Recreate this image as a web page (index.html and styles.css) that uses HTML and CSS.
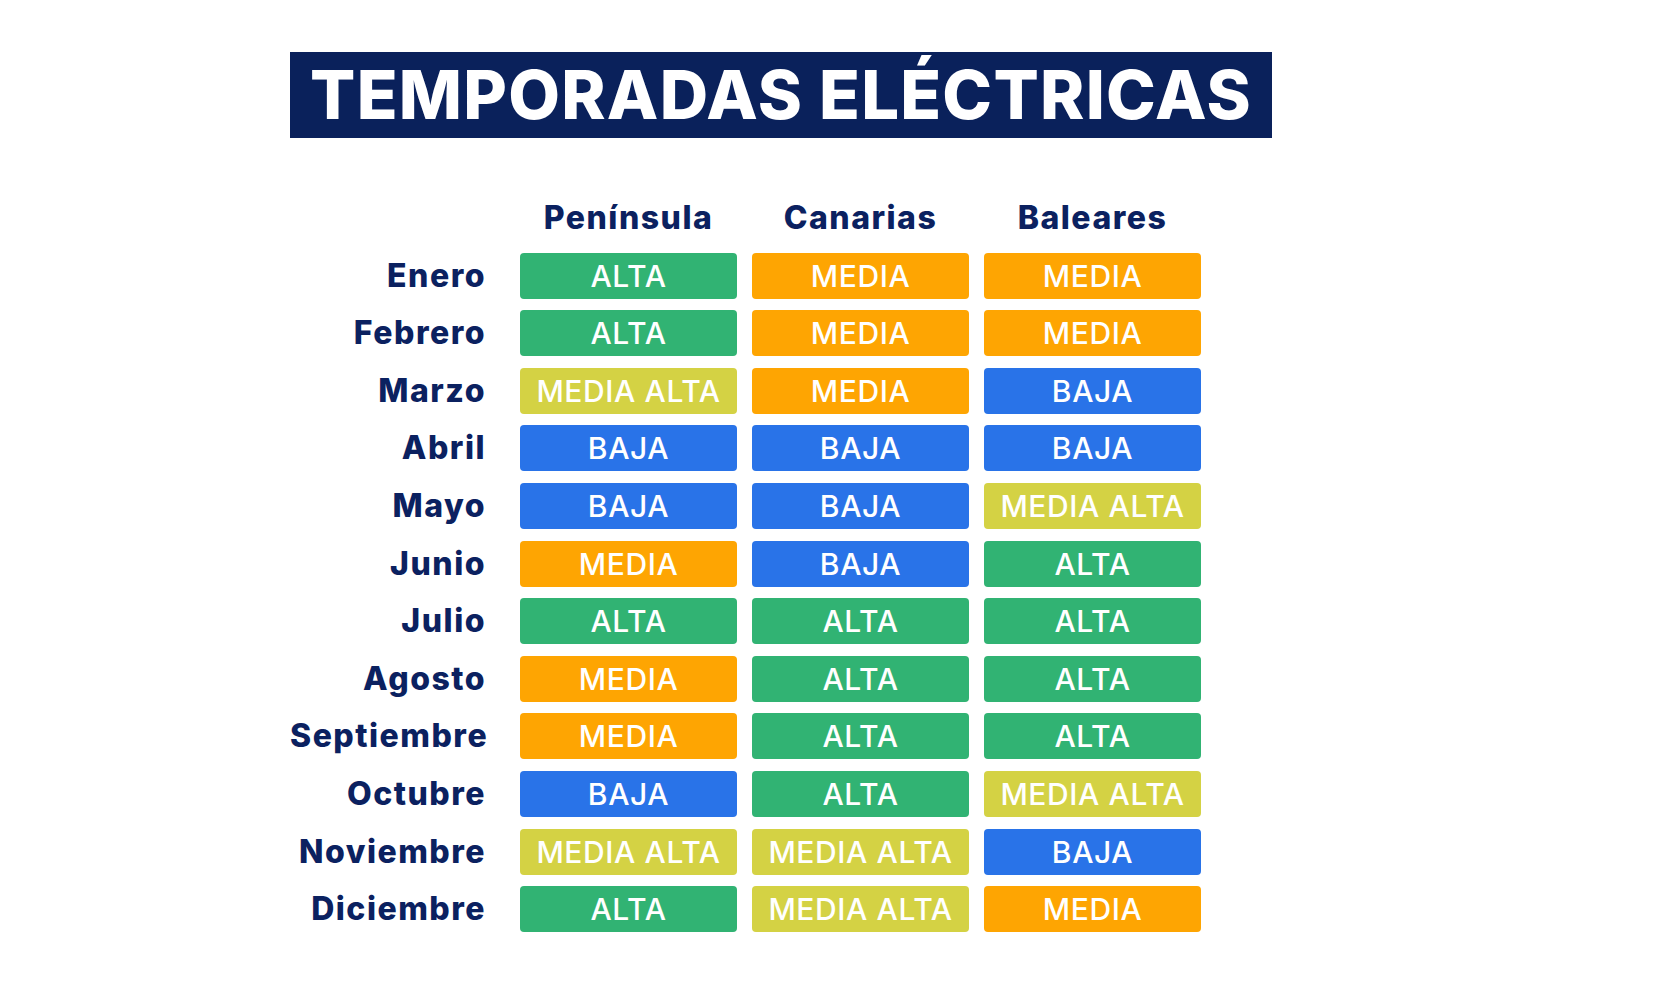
FILE: index.html
```html
<!DOCTYPE html>
<html lang="es">
<head>
<meta charset="utf-8">
<title>Temporadas eléctricas</title>
<link rel="stylesheet" href="styles.css">
</head>
<body>
<main class="page">
  <h1 class="title">TEMPORADAS ELÉCTRICAS</h1>
  <div class="table">
    <div class="head"></div>
    <div class="head">Península</div>
    <div class="head">Canarias</div>
    <div class="head">Baleares</div>

    <div class="month">Enero</div>
    <div class="cell alta">ALTA</div><div class="cell media">MEDIA</div><div class="cell media">MEDIA</div>

    <div class="month">Febrero</div>
    <div class="cell alta">ALTA</div><div class="cell media">MEDIA</div><div class="cell media">MEDIA</div>

    <div class="month">Marzo</div>
    <div class="cell malta">MEDIA ALTA</div><div class="cell media">MEDIA</div><div class="cell baja">BAJA</div>

    <div class="month">Abril</div>
    <div class="cell baja">BAJA</div><div class="cell baja">BAJA</div><div class="cell baja">BAJA</div>

    <div class="month">Mayo</div>
    <div class="cell baja">BAJA</div><div class="cell baja">BAJA</div><div class="cell malta">MEDIA ALTA</div>

    <div class="month">Junio</div>
    <div class="cell media">MEDIA</div><div class="cell baja">BAJA</div><div class="cell alta">ALTA</div>

    <div class="month">Julio</div>
    <div class="cell alta">ALTA</div><div class="cell alta">ALTA</div><div class="cell alta">ALTA</div>

    <div class="month">Agosto</div>
    <div class="cell media">MEDIA</div><div class="cell alta">ALTA</div><div class="cell alta">ALTA</div>

    <div class="month">Septiembre</div>
    <div class="cell media">MEDIA</div><div class="cell alta">ALTA</div><div class="cell alta">ALTA</div>

    <div class="month">Octubre</div>
    <div class="cell baja">BAJA</div><div class="cell alta">ALTA</div><div class="cell malta">MEDIA ALTA</div>

    <div class="month">Noviembre</div>
    <div class="cell malta">MEDIA ALTA</div><div class="cell malta">MEDIA ALTA</div><div class="cell baja">BAJA</div>

    <div class="month">Diciembre</div>
    <div class="cell alta">ALTA</div><div class="cell malta">MEDIA ALTA</div><div class="cell media">MEDIA</div>
  </div>
</main>
</body>
</html>
```
FILE: styles.css
```css
html, body {
  margin: 0;
  padding: 0;
  background: #ffffff;
}

.page {
  padding: 52px 0 0 290px;
  font-family: Inter, "Noto Sans", sans-serif;
  color: #0b2160;
}

.title {
  margin: 0;
  width: 982px;
  height: 86px;
  box-sizing: border-box;
  background: #0a215b;
  color: #ffffff;
  font-size: 67px;
  font-weight: 800;
  line-height: 86px;
  text-align: center;
  letter-spacing: 1.25px;
}

.table {
  display: grid;
  grid-template-columns: 215px 217px 217px 217px;
  grid-auto-rows: 46px;
  column-gap: 15px;
  row-gap: 11.6px;
  margin-top: 57px;
}

.head {
  font-size: 32px;
  font-weight: 800;
  text-align: center;
  line-height: 46px;
  letter-spacing: 1.5px;
  color: #0b2160;
}

.month {
  font-size: 32px;
  font-weight: 800;
  text-align: right;
  padding-right: 19px;
  line-height: 46px;
  letter-spacing: 1.5px;
  color: #0b2160;
}

.cell {
  border-radius: 4px;
  color: #ffffff;
  font-size: 30px;
  font-weight: 500;
  line-height: 46px;
  text-align: center;
  letter-spacing: 0.6px;
}

.alta { background: #31b373; }
.media { background: #fea502; }
.baja { background: #2973e8; }
.malta { background: #d4d244; }
```
